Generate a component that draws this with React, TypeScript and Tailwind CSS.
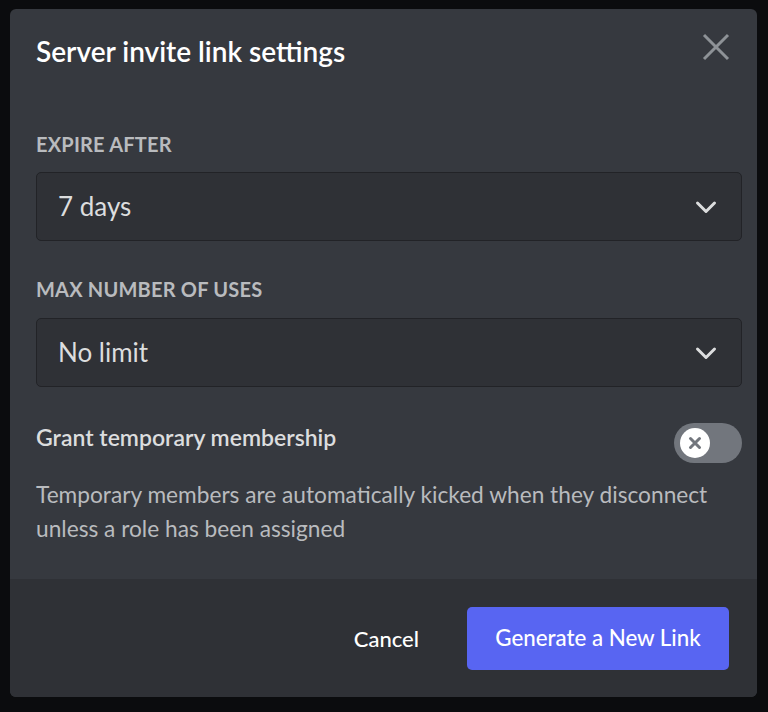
import React from 'react';

function Chevron() {
  return (
    <svg width="24" height="24" viewBox="0 0 24 24" fill="none">
      <path d="M3.5 8l8.5 8.5L20.5 8" stroke="#dcddde" strokeWidth="3" strokeLinecap="round" strokeLinejoin="round" />
    </svg>
  );
}

function SelectBox({ value }: { value: string }) {
  return (
    <div className="flex h-[69px] items-center justify-between rounded-[5px] border border-[#222327] bg-[#2f3136] pl-[21px] pr-[23px]">
      <span className="text-[26px] text-[#dcddde]">{value}</span>
      <Chevron />
    </div>
  );
}

function Label({ children }: { children: React.ReactNode }) {
  return (
    <div className="text-[20px] font-bold leading-[24px] tracking-[0.01em] text-[#b9bbbe]">{children}</div>
  );
}

export default function App() {
  return (
    <div className="h-[712px] w-full bg-[#0b0c0e] pl-[10px] pt-[9px]" style={{ fontFamily: 'Lato, "Noto Sans", sans-serif' }}>
      <div className="flex h-[688px] w-[747px] flex-col overflow-hidden rounded-[6px] bg-[#36393f]">
        <div className="flex items-start justify-between pl-[26px] pr-[27px] pt-[25px]">
          <h1 className="text-[28px] font-semibold leading-[34px] text-white">Server invite link settings</h1>
          <svg width="28" height="28" viewBox="0 0 28 28" className="mt-[-1px]">
            <path d="M2 2l24 24M26 2L2 26" stroke="#8e9297" strokeWidth="3" />
          </svg>
        </div>

        <div className="flex flex-1 flex-col pl-[26px] pr-[15px]">
          <div className="mt-[64px]">
            <Label>EXPIRE AFTER</Label>
          </div>
          <div className="mt-[16px]">
            <SelectBox value="7 days" />
          </div>
          <div className="mt-[36px]">
            <Label>MAX NUMBER OF USES</Label>
          </div>
          <div className="mt-[17px]">
            <SelectBox value="No limit" />
          </div>

          <div className="mt-[36px] flex items-start justify-between">
            <span className="mt-[1px] text-[23px] font-semibold leading-[26px] text-[#dcddde]">Grant temporary membership</span>
            <div className="flex h-[40px] w-[68px] items-center rounded-full bg-[#72767d] pl-[6px]">
              <div className="flex h-[30px] w-[30px] items-center justify-center rounded-full bg-white">
                <svg width="16" height="16" viewBox="0 0 16 16">
                  <path d="M3.5 3.5l9 9M12.5 3.5l-9 9" stroke="#72767d" strokeWidth="3" strokeLinecap="round" />
                </svg>
              </div>
            </div>
          </div>
          <p className="mt-[15px] text-[22.7px] leading-[34px] text-[#b9bbbe]">
            Temporary members are automatically kicked when they disconnect unless a role has been assigned
          </p>
        </div>

        <div className="flex h-[118px] items-center justify-end gap-[48px] bg-[#2f3136] pr-[28px]">
          <button className="text-[22px] font-medium text-white">Cancel</button>
          <button className="h-[63px] w-[262px] rounded-[5px] bg-[#5865f2] text-[22.3px] font-medium text-white">
            Generate a New Link
          </button>
        </div>
      </div>
    </div>
  );
}
